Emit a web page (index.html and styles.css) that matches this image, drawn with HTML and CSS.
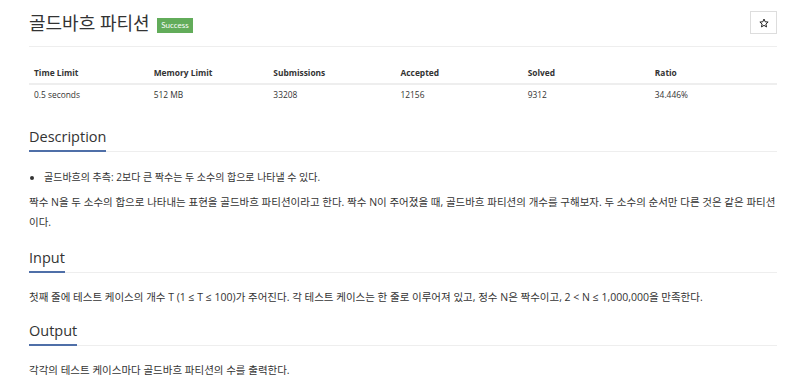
FILE: index.html
```html
<!DOCTYPE html>
<html lang="ko">
<head>
<meta charset="utf-8">
<link rel="stylesheet" href="styles.css">
</head>
<body>
<div class="page">
  <div class="title-row">
    <h1 class="title">골드바흐 파티션 <span class="badge">Success</span></h1>
    <button class="star" aria-label="star"><svg width="10" height="10" viewBox="0 0 24 24"><path d="M12 2.5l2.8 6.6 7.1.6-5.4 4.7 1.6 7-6.1-3.7-6.1 3.7 1.6-7L2.1 9.7l7.1-.6z" fill="none" stroke="#222" stroke-width="2.4" stroke-linejoin="round"/></svg></button>
  </div>
  <table class="info">
    <colgroup>
      <col class="c16"><col class="c16"><col class="c17"><col class="c17"><col class="c17"><col class="c17">
    </colgroup>
    <thead>
      <tr><th>Time Limit</th><th>Memory Limit</th><th>Submissions</th><th>Accepted</th><th>Solved</th><th>Ratio</th></tr>
    </thead>
    <tbody>
      <tr><td>0.5 seconds</td><td>512 MB</td><td>33208</td><td>12156</td><td>9312</td><td>34.446%</td></tr>
    </tbody>
  </table>

  <section class="sec sec-desc">
    <h2 class="headline"><span>Description</span></h2>
    <ul class="list"><li>골드바흐의 추측: 2보다 큰 짝수는 두 소수의 합으로 나타낼 수 있다.</li></ul>
    <p class="text">짝수 N을 두 소수의 합으로 나타내는 표현을 골드바흐 파티션이라고 한다. 짝수 N이 주어졌을 때, 골드바흐 파티션의 개수를 구해보자. 두 소수의 순서만 다른 것은 같은 파티션이다.</p>
  </section>

  <section class="sec sec-input">
    <h2 class="headline"><span>Input</span></h2>
    <p class="text">첫째 줄에 테스트 케이스의 개수 T (1 ≤ T ≤ 100)가 주어진다. 각 테스트 케이스는 한 줄로 이루어져 있고, 정수 N은 짝수이고, 2 &lt; N ≤ 1,000,000을 만족한다.</p>
  </section>

  <section class="sec sec-output">
    <h2 class="headline"><span>Output</span></h2>
    <p class="text">각각의 테스트 케이스마다 골드바흐 파티션의 수를 출력한다.</p>
  </section>
</div>
</body>
</html>
```
FILE: styles.css
```css
* { box-sizing: border-box; }
html, body { margin: 0; padding: 0; background: #fff; }
body {
  font-family: "Open Sans", "Noto Sans CJK KR", sans-serif;
  color: #333;
}
.page {
  width: 748px;
  margin-left: 29px;
}
.title-row {
  display: flex;
  justify-content: space-between;
  align-items: flex-start;
  padding-top: 11px;
  padding-bottom: 11px;
  border-bottom: 1px solid #eee;
}
.title {
  margin: 0;
  font-size: 18px;
  font-weight: 400;
  line-height: 24px;
  color: #333;
}
.badge {
  display: inline-block;
  vertical-align: 2px;
  margin-left: 3px;
  background: #62ac5a;
  color: #fff;
  font-family: "Lato", sans-serif;
  font-size: 8px;
  line-height: 15px;
  padding: 0 4px;
}
.star {
  width: 27px;
  height: 23px;
  border: 1px solid #ddd;
  background: #fff;
  padding: 0;
  display: flex;
  align-items: center;
  justify-content: center;
}
.info {
  width: 100%;
  table-layout: fixed;
  border-collapse: collapse;
  margin-top: 16px;
  font-size: 8.4px;
}
.c16 { width: 16%; }
.c17 { width: 17%; }
.info th {
  text-align: left;
  font-weight: 700;
  padding: 4px 5px 4px;
  border-bottom: 2px solid #eee;
  line-height: 12px;
}
.info td {
  padding: 4px 5px 5px;
  line-height: 12px;
}
.sec-desc { margin-top: 21px; }
.sec-input { margin-top: 16px; }
.sec-output { margin-top: 14px; }
.headline {
  display: flex;
  margin: 0;
  font-size: 14.5px;
  font-weight: 400;
  line-height: 20px;
  border-bottom: 1px solid #eee;
}
.headline span {
  border-bottom: 2px solid #4f6fa8;
  margin-bottom: -1px;
  padding-bottom: 3px;
}
.list {
  margin: 15px 0 0;
  padding-left: 15px;
  font-size: 10px;
  line-height: 20px;
}
.text {
  margin: 5px 0 0;
  font-size: 10.5px;
  line-height: 20px;
}
.sec .headline + .text { margin-top: 14px; }
```
